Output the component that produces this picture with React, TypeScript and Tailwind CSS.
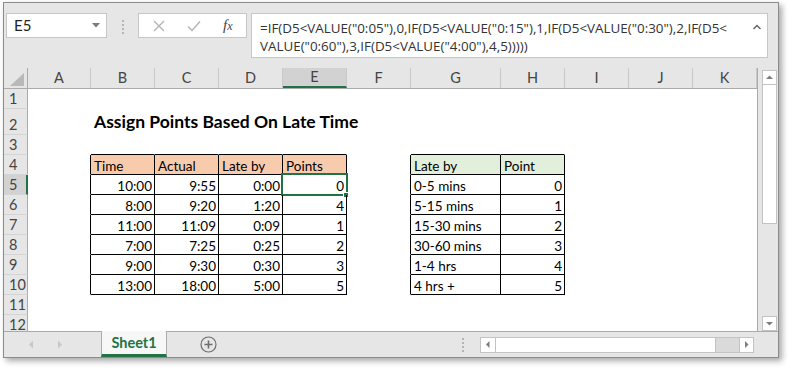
import React from 'react'

const cols = [
  { id: 'A', w: 63 },
  { id: 'B', w: 64 },
  { id: 'C', w: 64 },
  { id: 'D', w: 64 },
  { id: 'E', w: 64 },
  { id: 'F', w: 64 },
  { id: 'G', w: 90 },
  { id: 'H', w: 64 },
  { id: 'I', w: 64 },
  { id: 'J', w: 64 },
  { id: 'K', w: 64 },
]

const rowHeights = [20, 26, 20, 20, 20, 20, 20, 20, 20, 20, 20, 20]

const times = [
  ['10:00', '9:55', '0:00', '0'],
  ['8:00', '9:20', '1:20', '4'],
  ['11:00', '11:09', '0:09', '1'],
  ['7:00', '7:25', '0:25', '2'],
  ['9:00', '9:30', '0:30', '3'],
  ['13:00', '18:00', '5:00', '5'],
]

const lookup = [
  ['0-5 mins', '0'],
  ['5-15 mins', '1'],
  ['15-30 mins', '2'],
  ['30-60 mins', '3'],
  ['1-4 hrs', '4'],
  ['4 hrs +', '5'],
]

const table1 = ['B', 'C', 'D', 'E']
const table2 = ['G', 'H']

function cellInfo(row: number, col: string) {
  const inT1 = table1.includes(col) && row >= 4 && row <= 10
  const inT2 = table2.includes(col) && row >= 4 && row <= 10
  const inTable = inT1 || inT2
  const leftOfTable = (col === 'A' || col === 'F') && row >= 4 && row <= 10
  const aboveTable = row === 3 && (table1.includes(col) || table2.includes(col))

  let text = ''
  let right = false
  let bg = ''
  if (row === 4 && inT1) {
    text = ['Time', 'Actual', 'Late by', 'Points'][table1.indexOf(col)]
    bg = 'bg-[#f8cbad]'
  } else if (row === 4 && inT2) {
    text = ['Late by', 'Point'][table2.indexOf(col)]
    bg = 'bg-[#e2efda]'
  } else if (inT1) {
    text = times[row - 5][table1.indexOf(col)]
    right = true
  } else if (inT2) {
    const i = table2.indexOf(col)
    text = lookup[row - 5][i]
    right = i === 1
  }

  return {
    text,
    right,
    bg,
    borderR: inTable || leftOfTable,
    borderB: inTable || aboveTable,
  }
}

function Cell({ row, col, w }: { row: number; col: string; w: number }) {
  const c = cellInfo(row, col)
  return (
    <div
      style={{ width: w }}
      className={`relative flex h-full shrink-0 items-end overflow-visible border-r border-b leading-[16px] ${
        c.borderR ? 'border-r-black' : 'border-r-transparent'
      } ${c.borderB ? 'border-b-black' : 'border-b-transparent'} ${c.bg} ${
        c.right ? 'justify-end pr-[2px]' : 'justify-start pl-[3px]'
      }`}
    >
      {c.text}
      {row === 2 && col === 'B' && (
        <span className="absolute bottom-[1px] left-[3px] whitespace-nowrap text-[17.5px] leading-[22px] font-bold">
          Assign Points Based On Late Time
        </span>
      )}
      {row === 5 && col === 'E' && (
        <>
          <span className="absolute -top-[2px] -left-[2px] h-[23px] w-[67px] border-2 border-[#217346]" />
          <span className="absolute -right-[3px] -bottom-[4px] h-[6px] w-[6px] border border-white bg-[#217346]" />
        </>
      )}
    </div>
  )
}

function FormulaBar() {
  return (
    <div className="flex h-[65px] shrink-0 items-start pt-[10px] pl-[2px]">
      {/* Name box */}
      <div className="flex h-[25px] w-[101px] items-center justify-between border border-[#c6c6c6] bg-white pr-[6px] pl-[7px] text-[15px] text-[#222]">
        <span>E5</span>
        <svg width="8" height="5" viewBox="0 0 8 5">
          <path d="M0 0 H8 L4 4.5 Z" fill="#7a7a7a" />
        </svg>
      </div>
      <div className="flex w-[31px] flex-col items-center gap-[2px] pt-[7px]">
        <span className="h-[2px] w-[2px] bg-[#b4b4b4]" />
        <span className="h-[2px] w-[2px] bg-[#b4b4b4]" />
        <span className="h-[2px] w-[2px] bg-[#b4b4b4]" />
        <span className="h-[2px] w-[2px] bg-[#b4b4b4]" />
      </div>
      {/* Cancel / enter / fx */}
      <div className="flex h-[25px] w-[109px] items-center border border-[#c6c6c6] bg-white">
        <svg width="12" height="12" viewBox="0 0 12 12" className="ml-[14px]">
          <path d="M1 1 L11 11 M11 1 L1 11" stroke="#b3b3b3" strokeWidth="1.4" />
        </svg>
        <svg width="14" height="12" viewBox="0 0 14 12" className="ml-[22px]">
          <path d="M1 6.5 L5 10.5 L13 1.5" stroke="#b3b3b3" strokeWidth="1.4" fill="none" />
        </svg>
        <span className="ml-[22px] font-['Liberation_Serif',serif] text-[15px] italic text-[#444]">
          f<span className="text-[12px]">x</span>
        </span>
      </div>
      {/* Formula */}
      <div className="ml-[4px] flex h-[45px] w-[517px] justify-between border border-[#c6c6c6] bg-white pt-[5px] pr-[6px] pl-[8px] font-['Open_Sans',sans-serif] text-[13.4px] leading-[18px] text-[#333]">
        <div className="whitespace-nowrap">
          =IF(D5&lt;VALUE("0:05"),0,IF(D5&lt;VALUE("0:15"),1,IF(D5&lt;VALUE("0:30"),2,IF(D5&lt;
          <br />
          VALUE("0:60"),3,IF(D5&lt;VALUE("4:00"),4,5)))))
        </div>
        <svg width="8" height="6" viewBox="0 0 8 6" className="mt-[5px]">
          <path d="M0.5 5 L4 1.5 L7.5 5" stroke="#666" strokeWidth="1.5" fill="none" />
        </svg>
      </div>
    </div>
  )
}

function ScrollButton({ dir }: { dir: 'up' | 'down' }) {
  return (
    <div className="flex h-[15px] w-[15px] shrink-0 items-center justify-center border border-[#c3c3c3] bg-white">
      <svg width="9" height="9" viewBox="0 0 9 9">
        <path d={dir === 'up' ? 'M1 6 H8 L4.5 2.5 Z' : 'M1 3 H8 L4.5 6.5 Z'} fill="#7d7d7d" />
      </svg>
    </div>
  )
}

export default function App() {
  return (
    <div className="h-[368px] w-[788px] overflow-hidden bg-white pt-[2px] pl-[3px] font-['Lato','Noto_Sans',sans-serif] text-[13.5px] text-black">
      <div className="flex h-[356px] w-[776px] flex-col border border-[#8c8c8c] bg-[#e6e6e6] shadow-[3px_3px_6px_rgba(0,0,0,0.35)]">
        <FormulaBar />

        <div className="flex min-h-0 flex-1">
          {/* Grid */}
          <div className="flex w-[754px] shrink-0 flex-col border-r border-[#ababab]">
            {/* Column header */}
            <div className="flex h-[21px] shrink-0 border-b border-[#ababab] text-[14.5px] text-[#444]">
              <div className="relative w-[24px] shrink-0 border-r border-[#ababab]">
                <svg width="14" height="13" viewBox="0 0 14 13" className="absolute right-[3px] bottom-[2px]">
                  <path d="M14 0 V13 H0 Z" fill="#b9b9b9" />
                </svg>
              </div>
              {cols.map((c) => (
                <div
                  key={c.id}
                  style={{ width: c.w }}
                  className={`flex shrink-0 items-center justify-center border-r border-[#c9c9c9] ${
                    c.id === 'E' ? 'border-b-2 border-b-[#217346] bg-[#d2d2d2]' : ''
                  }`}
                >
                  {c.id}
                </div>
              ))}
            </div>

            {/* Rows */}
            <div className="min-h-0 flex-1 overflow-hidden">
              {rowHeights.map((h, i) => {
                const row = i + 1
                return (
                  <div key={row} style={{ height: h }} className="flex">
                    <div
                      className={`flex w-[24px] shrink-0 items-end border-b border-[#d4d4d4] pb-[1px] pl-[5px] text-[14.5px] leading-[16px] text-[#444] ${
                        row === 5 ? 'border-r-2 border-r-[#217346] bg-[#d2d2d2]' : 'border-r border-r-[#ababab]'
                      }`}
                    >
                      {row}
                    </div>
                    <div className="flex flex-1 bg-white">
                      {cols.map((c) => (
                        <Cell key={c.id} row={row} col={c.id} w={c.w} />
                      ))}
                    </div>
                  </div>
                )
              })}
            </div>
          </div>

          {/* Vertical scrollbar */}
          <div className="ml-[4px] flex w-[15px] flex-col pt-[2px]">
            <ScrollButton dir="up" />
            <div className="h-[139px] border-x border-b border-[#c3c3c3] bg-white" />
            <div className="flex-1" />
            <ScrollButton dir="down" />
          </div>
        </div>

        {/* Sheet tabs */}
        <div className="flex h-[26px] shrink-0 items-stretch">
          <div className="flex w-[97px] items-center border-t border-[#ababab] pl-[24px]">
            <svg width="40" height="9" viewBox="0 0 40 9">
              <path d="M5 0.5 V8.5 L1 4.5 Z" fill="#c8c8c8" />
              <path d="M30 0.5 V8.5 L34 4.5 Z" fill="#c8c8c8" />
            </svg>
          </div>
          <div className="flex w-[66px] items-center justify-center border-x border-[#ababab] border-b-[3px] border-b-[#217346] bg-[#f7f7f7] pt-[1px] text-[14.5px] font-bold text-[#217346]">
            Sheet1
          </div>
          <div className="flex flex-1 items-center border-t border-[#ababab]">
            <svg width="17" height="17" viewBox="0 0 17 17" className="ml-[33px]">
              <circle cx="8.5" cy="8.5" r="7.5" stroke="#6f6f6f" strokeWidth="1.2" fill="none" />
              <path d="M8.5 4.5 V12.5 M4.5 8.5 H12.5" stroke="#6f6f6f" strokeWidth="1.6" />
            </svg>
            <div className="ml-[245px] flex flex-col gap-[2px]">
              <span className="h-[2px] w-[2px] bg-[#b4b4b4]" />
              <span className="h-[2px] w-[2px] bg-[#b4b4b4]" />
              <span className="h-[2px] w-[2px] bg-[#b4b4b4]" />
              <span className="h-[2px] w-[2px] bg-[#b4b4b4]" />
            </div>
            <div className="ml-[16px] flex h-[16px] w-[274px] border border-[#c3c3c3] bg-[#dadada]">
              <div className="flex h-full w-[15px] items-center justify-center border-r border-[#c3c3c3] bg-white">
                <svg width="9" height="9" viewBox="0 0 9 9">
                  <path d="M5.5 1 V8 L2 4.5 Z" fill="#7d7d7d" />
                </svg>
              </div>
              <div className="h-full w-[220px] border-r border-[#c3c3c3] bg-white" />
              <div className="flex-1" />
              <div className="flex h-full w-[14px] items-center justify-center border-l border-[#c3c3c3] bg-white">
                <svg width="9" height="9" viewBox="0 0 9 9">
                  <path d="M3 1 V8 L6.5 4.5 Z" fill="#7d7d7d" />
                </svg>
              </div>
            </div>
          </div>
        </div>
      </div>
    </div>
  )
}
